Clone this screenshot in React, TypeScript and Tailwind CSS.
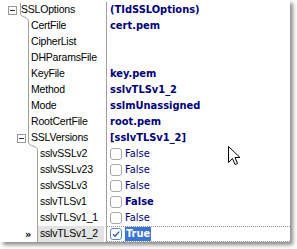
import React from "react";

type Row = {
  name: string;
  level: 0 | 1 | 2;
  value?: string;
  bold?: boolean;
  check?: boolean;
  checked?: boolean;
  selected?: boolean;
};

const rows: Row[] = [
  { name: "SSLOptions", level: 0, value: "(TIdSSLOptions)", bold: true },
  { name: "CertFile", level: 1, value: "cert.pem", bold: true },
  { name: "CipherList", level: 1 },
  { name: "DHParamsFile", level: 1 },
  { name: "KeyFile", level: 1, value: "key.pem", bold: true },
  { name: "Method", level: 1, value: "sslvTLSv1_2", bold: true },
  { name: "Mode", level: 1, value: "sslmUnassigned", bold: true },
  { name: "RootCertFile", level: 1, value: "root.pem", bold: true },
  { name: "SSLVersions", level: 1, value: "[sslvTLSv1_2]", bold: true },
  { name: "sslvSSLv2", level: 2, value: "False", check: true },
  { name: "sslvSSLv23", level: 2, value: "False", check: true },
  { name: "sslvSSLv3", level: 2, value: "False", check: true },
  { name: "sslvTLSv1", level: 2, value: "False", check: true, bold: true },
  { name: "sslvTLSv1_1", level: 2, value: "False", check: true },
  { name: "sslvTLSv1_2", level: 2, value: "True", check: true, checked: true, selected: true, bold: true },
];

const padFor = (l: number) => (l === 0 ? "pl-[21px]" : l === 1 ? "pl-[31px]" : "pl-[40px]");

function CheckBox({ checked }: { checked?: boolean }) {
  return (
    <svg width="12" height="12" viewBox="0 0 12 12" className="shrink-0">
      <rect x="0.5" y="0.5" width="11" height="11" rx="2.5" fill="#ffffff" stroke={checked ? "#5b86c8" : "#a8a8a8"} />
      {checked && <path d="M3 6.2 L5 8.2 L9.2 3.6" fill="none" stroke="#2a5ab0" strokeWidth="1.4" />}
    </svg>
  );
}

export default function App() {
  return (
    <div className="w-[297px] h-[249px] bg-white relative overflow-hidden [font-family:'DejaVu_Sans_Condensed','DejaVu_Sans',sans-serif] [font-stretch:condensed]">
      <div className="relative w-[290px] h-[242px] bg-white pt-[2px] shadow-[3px_3px_4px_rgba(0,0,0,0.45)]">
        {rows.map((r, i) => (
          <div key={i} className="flex h-4 items-stretch">
            <div
              className={`w-[106px] shrink-0 flex items-center ${padFor(r.level)} text-[10.5px] tracking-[-0.2px] text-black [font-family:'Liberation_Sans',Arial,sans-serif] [font-stretch:normal]`}
            >
              <div className={`h-full flex items-center w-full ${r.selected ? "bg-[#e3e3e3] -ml-[2px] pl-[2px]" : ""}`}>{r.name}</div>
            </div>
            <div className="w-px bg-[#a0a0a0] shrink-0" />
            <div
              className={`flex-1 flex items-center pl-[3px] gap-[3px] ${
                r.selected ? "border-y border-dotted border-[#909090]" : ""
              }`}
            >
              {r.check && <CheckBox checked={r.checked} />}
              {r.value && (
                <span
                  className={`leading-[14px] text-[11px] ${r.bold ? "font-bold" : ""} ${
                    r.selected ? "bg-[#3875d7] text-white px-[1px]" : "text-[#000080]"
                  }`}
                >
                  {r.value}
                </span>
              )}
            </div>
          </div>
        ))}
        <svg className="absolute left-0 top-0 pointer-events-none" width="106" height="242" viewBox="0 0 106 242">
          <path
            d="M20.5 3 V13 C20.5 18 28.5 16 28.5 22 V142 C28.5 147 37.5 145 37.5 150 V242"
            fill="none"
            stroke="#a0a0a0"
          />
          <rect x="8.5" y="6.5" width="8" height="8" fill="#fff" stroke="#9a9a9a" />
          <path d="M10 10.5 H15" stroke="#333" />
          <rect x="17.5" y="134.5" width="8" height="8" fill="#fff" stroke="#9a9a9a" />
          <path d="M19 138.5 H24" stroke="#333" />
          <text x="25" y="238" fontSize="11" fontWeight="bold" fill="#000" fontFamily="DejaVu Sans">»</text>
        </svg>
        <svg className="absolute left-[228px] top-[146px]" width="13" height="20" viewBox="0 0 13 20">
          <path d="M0.5 0.5 V16.5 L4.5 12.5 L7 18.5 L9.5 17.5 L7 11.5 L12 11.5 Z" fill="#fff" stroke="#000" />
        </svg>
      </div>
    </div>
  );
}
